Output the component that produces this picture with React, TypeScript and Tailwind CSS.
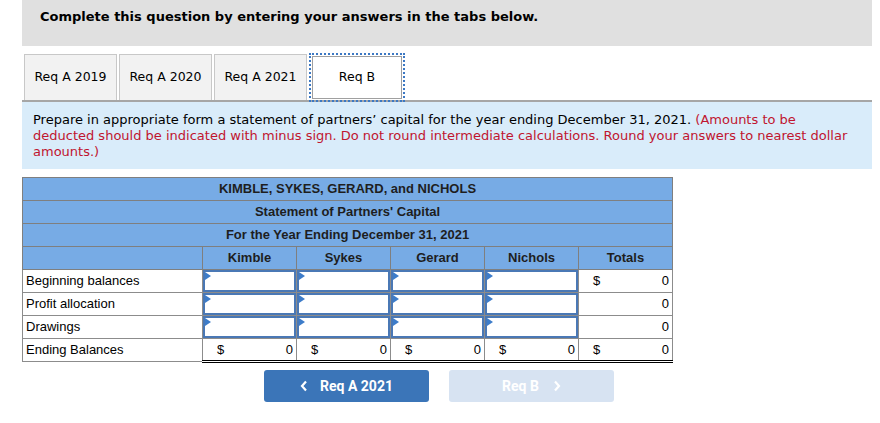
import React from "react";

const partners = ["Kimble", "Sykes", "Gerard", "Nichols"];
const labels = ["Beginning balances", "Profit allocation", "Drawings"];

function InputCell() {
  return (
    <td className="h-[23px] border border-[#8c8c8c] p-0 bg-white">
      <div className="relative h-[22px] border-2 border-[#4a78b5] bg-white">
        <div className="absolute left-0 top-0 w-0 h-0 border-t-[4px] border-b-[4px] border-l-[6px] border-t-transparent border-b-transparent border-l-[#3d7cc9]" />
      </div>
    </td>
  );
}

export default function App() {
  return (
    <div className="w-[880px] h-[423px] bg-white relative" style={{ fontFamily: "'DejaVu Sans', Verdana, sans-serif" }}>
      <div className="ml-[22px] w-[850px]">
        {/* header */}
        <div className="h-[46px] bg-[#e0e0e0] pl-[18px] pt-[7px] text-[13px] font-bold text-black">
          Complete this question by entering your answers in the tabs below.
        </div>
        {/* tabs */}
        <div className="mt-[8px] flex items-end h-[48px] border-b-2 border-[#a6a6a6] pl-[2px]">
          {["Req A 2019", "Req A 2020", "Req A 2021"].map((t) => (
            <div
              key={t}
              className="w-[93px] h-[46px] mr-[2px] bg-[#f2f2f2] border border-[#c8c8c8] border-b-0 flex items-center justify-center text-[12.5px] text-black"
            >
              {t}
            </div>
          ))}
          <div className="w-[96px] h-[49px] -mb-[2px] border-2 border-dotted border-[#3c78c3] p-[1px]">
            <div className="w-full h-full bg-white border border-[#a0a0a0] flex items-center justify-center text-[12.5px] text-black">
              Req B
            </div>
          </div>
        </div>
        {/* instructions */}
        <div className="bg-[#d9ecfa] h-[67px] pl-[11px] pt-[10px] text-[13px] leading-[16px] whitespace-nowrap">
          <span className="text-black">Prepare in appropriate form a statement of partners’ capital for the year ending December 31, 2021. </span>
          <span className="text-[#c0152f]">
            (Amounts to be
            <br />
            deducted should be indicated with minus sign. Do not round intermediate calculations. Round your answers to nearest dollar
            <br />
            amounts.)
          </span>
        </div>
      </div>

      {/* table */}
      <div className="ml-[22px] mt-[8px]" style={{ fontFamily: "'Liberation Sans', Arial, sans-serif" }}>
        <table className="border-collapse table-fixed w-[650px] text-[13px] text-black">
          <colgroup>
            <col className="w-[180px]" />
            <col className="w-[94px]" />
            <col className="w-[94px]" />
            <col className="w-[94px]" />
            <col className="w-[94px]" />
            <col className="w-[94px]" />
          </colgroup>
          <tbody>
            {[
              "KIMBLE, SYKES, GERARD, and NICHOLS",
              "Statement of Partners' Capital",
              "For the Year Ending December 31, 2021",
            ].map((t) => (
              <tr key={t}>
                <td colSpan={6} className="h-[23px] p-0 border border-[#7f7f7f] bg-[#77abe5] text-center font-bold text-[#1e1e1e]">
                  {t}
                </td>
              </tr>
            ))}
            <tr>
              <td className="h-[23px] p-0 border border-[#7f7f7f] bg-[#77abe5]" />
              {[...partners, "Totals"].map((p) => (
                <td key={p} className="h-[23px] p-0 border border-[#7f7f7f] bg-[#77abe5] text-center font-bold text-[#1e1e1e]">
                  {p}
                </td>
              ))}
            </tr>
            {labels.map((l, i) => (
              <tr key={l}>
                <td className="h-[23px] px-[3px] py-0 border border-[#8c8c8c] bg-white">{l}</td>
                <InputCell />
                <InputCell />
                <InputCell />
                <InputCell />
                <td className="h-[23px] px-[3px] py-0 border border-[#8c8c8c] bg-white">
                  <div className="flex justify-between pl-[11px]">
                    <span>{i === 0 ? "$" : ""}</span>
                    <span>0</span>
                  </div>
                </td>
              </tr>
            ))}
            <tr>
              <td className="h-[23px] px-[3px] py-0 border border-[#8c8c8c] bg-white">Ending Balances</td>
              {[0, 1, 2, 3, 4].map((k) => (
                <td
                  key={k}
                  className="h-[23px] px-[3px] py-0 border border-[#8c8c8c] border-t-black border-b-[3px] border-b-black border-double bg-white"
                  style={{ borderTopStyle: "solid", borderLeftStyle: "solid", borderRightStyle: "solid" }}
                >
                  <div className="flex justify-between pl-[11px]">
                    <span>$</span>
                    <span>0</span>
                  </div>
                </td>
              ))}
            </tr>
          </tbody>
        </table>
      </div>

      {/* buttons */}
      <div className="mt-[7px] flex justify-center gap-[20px] pr-[2px]" style={{ fontFamily: "Roboto, Arial, sans-serif" }}>
        <div className="w-[165px] h-[32px] rounded-[3px] bg-[#3b75b8] flex items-center justify-center gap-[12px] text-white font-bold text-[14px]">
          <svg width="8" height="12" viewBox="0 0 8 12"><path d="M6 1.5 L2 6 L6 10.5" stroke="white" strokeWidth="2.2" fill="none" /></svg>
          <span>Req A 2021</span>
        </div>
        <div className="w-[165px] h-[32px] rounded-[3px] bg-[#d7e3f2] flex items-center justify-center gap-[14px] text-white font-bold text-[14px]">
          <span>Req B</span>
          <svg width="8" height="12" viewBox="0 0 8 12"><path d="M2 1.5 L6 6 L2 10.5" stroke="white" strokeWidth="2.2" fill="none" /></svg>
        </div>
      </div>
    </div>
  );
}
